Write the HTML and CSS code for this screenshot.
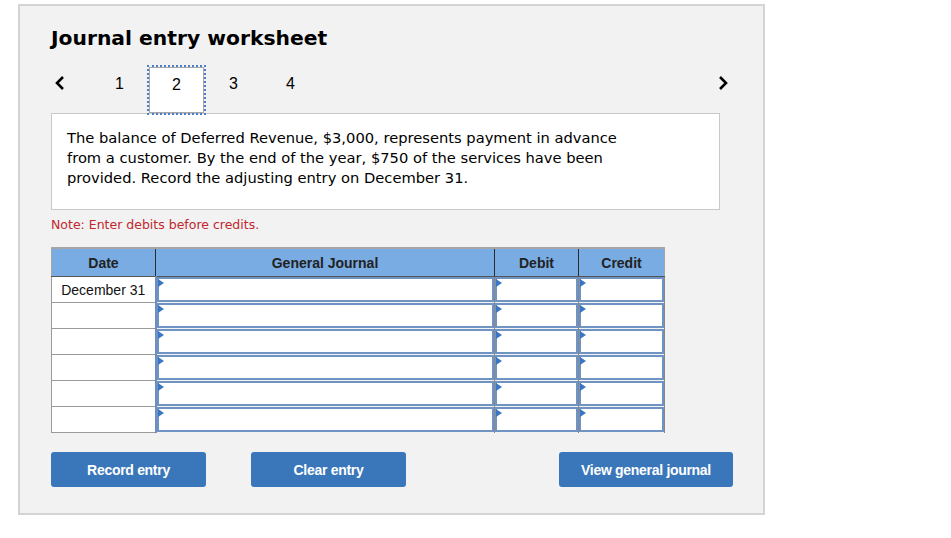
FILE: index.html
```html
<!DOCTYPE html>
<html>
<head>
<meta charset="utf-8">
<link rel="stylesheet" href="styles.css">
</head>
<body>
<div class="panel">
  <h1 class="title">Journal entry worksheet</h1>
  <div class="nav">
    <span class="arrow left"><svg width="12" height="16" viewBox="0 0 12 16"><polyline points="9,2 3,8 9,14" fill="none" stroke="#000" stroke-width="2.6"/></svg></span>
    <span class="tab">1</span>
    <span class="tab active">2</span>
    <span class="tab">3</span>
    <span class="tab">4</span>
    <span class="spacer"></span>
    <span class="arrow right"><svg width="12" height="16" viewBox="0 0 12 16"><polyline points="3,2 9,8 3,14" fill="none" stroke="#000" stroke-width="2.6"/></svg></span>
  </div>
  <div class="question">The balance of Deferred Revenue, $3,000, represents payment in advance from a customer. By the end of the year, $750 of the services have been provided. Record the adjusting entry on December 31.</div>
  <div class="note">Note: Enter debits before credits.</div>
  <table class="journal">
    <colgroup><col class="c-date"><col class="c-gj"><col class="c-dr"><col class="c-cr"></colgroup>
    <thead>
      <tr><th>Date</th><th>General Journal</th><th>Debit</th><th>Credit</th></tr>
    </thead>
    <tbody>
      <tr><td class="date">December 31</td><td class="in"><div class="box"></div></td><td class="in"><div class="box"></div></td><td class="in"><div class="box"></div></td></tr>
      <tr><td class="date"></td><td class="in"><div class="box"></div></td><td class="in"><div class="box"></div></td><td class="in"><div class="box"></div></td></tr>
      <tr><td class="date"></td><td class="in"><div class="box"></div></td><td class="in"><div class="box"></div></td><td class="in"><div class="box"></div></td></tr>
      <tr><td class="date"></td><td class="in"><div class="box"></div></td><td class="in"><div class="box"></div></td><td class="in"><div class="box"></div></td></tr>
      <tr><td class="date"></td><td class="in"><div class="box"></div></td><td class="in"><div class="box"></div></td><td class="in"><div class="box"></div></td></tr>
      <tr><td class="date"></td><td class="in"><div class="box"></div></td><td class="in"><div class="box"></div></td><td class="in"><div class="box"></div></td></tr>
    </tbody>
  </table>
  <div class="buttons">
    <button class="btn b-record">Record entry</button>
    <button class="btn b-clear">Clear entry</button>
    <span class="spacer"></span>
    <button class="btn b-view">View general journal</button>
  </div>
</div>
</body>
</html>
```
FILE: styles.css
```css
html, body { margin: 0; padding: 0; background: #fff; }
body { font-family: "DejaVu Sans", Verdana, sans-serif; }

.panel {
  margin: 4px 0 0 18px;
  height: 507px;
  border: 2px solid #d4d4d4;
  background: #f2f2f2;
  padding: 0 0 0 31px;
  box-sizing: content-box;
  width: 712px;
}

.title {
  margin: 0;
  padding-top: 20px;
  font-size: 20.3px;
  font-weight: bold;
  line-height: 24px;
  color: #000;
}

.nav {
  display: flex;
  align-items: flex-start;
  height: 48px;
  margin-top: 16px;
  width: 678px;
  font-family: "Liberation Sans", Arial, sans-serif;
  font-size: 16px;
  line-height: 18px;
}
.arrow { display: flex; align-items: center; height: 18px; padding-top: 8px; }
.arrow.left { width: 40px; padding-left: 3px; box-sizing: border-box; height: 26px; }
.tab {
  width: 57px;
  height: 48px;
  box-sizing: border-box;
  padding-top: 9px;
  text-align: center;
}
.tab.active {
  background: #fff;
  border: 1px solid #a8a8a8;
  outline: 2px dotted #4a7fc8;
  outline-offset: 0;
  height: 46px;
  width: 55px;
  margin: 1px 1px 0;
  padding-top: 8px;
}
.spacer { flex: 1; }

.question {
  margin-top: -1px;
  width: 669px;
  box-sizing: border-box;
  height: 97px;
  background: #fff;
  border: 1px solid #c9c9c9;
  padding: 14px 90px 0 15px;
  font-family: "DejaVu Sans", Verdana, sans-serif;
  font-size: 14.7px;
  line-height: 20px;
  color: #000;
}

.note {
  margin-top: 7px;
  font-size: 12.5px;
  line-height: 16px;
  color: #c1272d;
}

.journal {
  margin-top: 14px;
  border-collapse: collapse;
  table-layout: fixed;
  width: 613px;
  font-family: "Liberation Sans", Arial, sans-serif;
  font-size: 14px;
  border-top: 2px solid #a6a6a6;
}
.c-date { width: 104px; }
.c-gj { width: 339px; }
.c-dr { width: 84px; }
.c-cr { width: 86px; }

.journal th {
  background: #79ace2;
  height: 27px;
  padding: 0;
  font-weight: bold;
  color: #222;
  border-left: 1px solid #2b2b2b;
  border-bottom: 1px solid #555;
}
.journal th:first-child { border-left: 1px solid #a6a6a6; }
.journal th:last-child { border-right: 1px solid #a6a6a6; }

.journal td { padding: 0; height: 25px; }
.journal td.date {
  background: #fff;
  border: 1px solid #9a9a9a;
  border-right: 2px solid #6c8fbf;
  text-align: center;
  color: #111;
}
.journal td.in {
  border-left: 1px solid #888;
  border-right: 1px solid #888;
}
.box {
  position: relative;
  height: 25px;
  box-sizing: border-box;
  background: #fff;
  border: 2px solid #6f93c2;
}
.box::before {
  content: "";
  position: absolute;
  left: -1px;
  top: 0;
  border-top: 4px solid transparent;
  border-bottom: 4px solid transparent;
  border-left: 6px solid #3a76c4;
}

.buttons {
  display: flex;
  width: 682px;
  margin-top: 19px;
}
.btn {
  height: 35px;
  border: none;
  border-radius: 3px;
  background: #3a77ba;
  color: #fff;
  font-family: "Liberation Sans", Arial, sans-serif;
  font-weight: bold;
  font-size: 14px;
  padding: 0;
  letter-spacing: -0.3px;
}
.b-record { width: 155px; }
.b-clear { width: 155px; margin-left: 45px; }
.b-view { width: 174px; }
```
